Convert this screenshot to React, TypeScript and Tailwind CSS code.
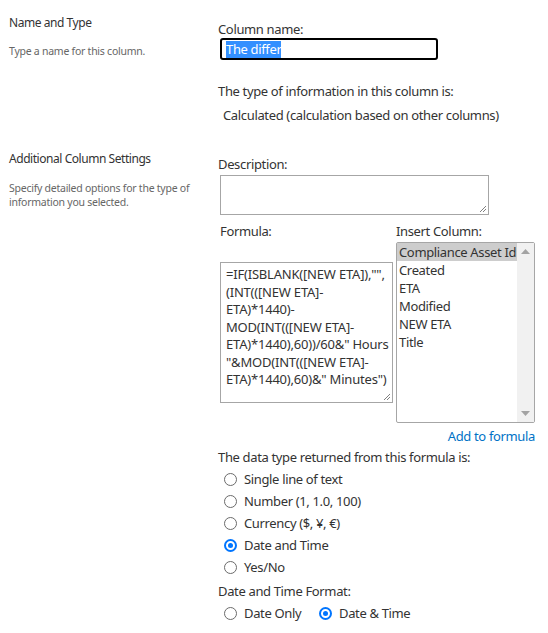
const FONT = "font-['Noto_Sans',_'Liberation_Sans',_sans-serif]";
const BODY = "text-[13px] leading-[18px] tracking-[-0.35px]";

const FORMULA_LINES = [
  '=IF(ISBLANK([NEW ETA]),"",',
  "(INT(([NEW ETA]-",
  "ETA)*1440)-",
  "MOD(INT(([NEW ETA]-",
  'ETA)*1440),60))/60&" Hours',
  '"&MOD(INT(([NEW ETA]-',
  'ETA)*1440),60)&" Minutes")',
];

const COLUMNS = ["Compliance Asset Id", "Created", "ETA", "Modified", "NEW ETA", "Title"];

const RETURN_TYPES = [
  { label: "Single line of text", checked: false },
  { label: "Number (1, 1.0, 100)", checked: false },
  { label: "Currency ($, ¥, €)", checked: false },
  { label: "Date and Time", checked: true },
  { label: "Yes/No", checked: false },
];

function Radio({ checked }: { checked: boolean }) {
  if (checked) {
    return (
      <span className="flex h-[13px] w-[13px] shrink-0 items-center justify-center rounded-full border-2 border-[#0075ff] bg-white">
        <span className="h-[5px] w-[5px] rounded-full bg-[#0075ff]" />
      </span>
    );
  }
  return <span className="h-[13px] w-[13px] shrink-0 rounded-full border border-[#6b6b6b] bg-white" />;
}

function Grip() {
  return (
    <svg className="absolute right-[1px] bottom-[1px]" width="9" height="9" viewBox="0 0 9 9">
      <path d="M8 2 L2 8 M8 5 L5 8" stroke="#808080" strokeWidth="1" />
    </svg>
  );
}

export default function App() {
  return (
    <div className={`${FONT} h-[633px] w-[548px] overflow-hidden bg-white text-[#333]`}>
      {/* Name and Type */}
      <div className="flex">
        <div className="w-[209px] pl-[9px] pt-[15px]">
          <div className="text-[12px] leading-[16px] tracking-[-0.45px]">Name and Type</div>
          <div className="mt-[13px] text-[10.5px] leading-[14px] tracking-[-0.25px] text-[#666]">
            Type a name for this column.
          </div>
        </div>
        <div className="pt-[20px] pl-[9px] pb-[16px]">
          <div className={BODY}>Column name:</div>
          <div className="ml-[2px] flex h-[22px] w-[218px] items-center rounded-[3px] border-2 border-black pl-[4px]">
            <span className="bg-[#3390ff] text-[13px] leading-[17px] tracking-[-0.35px] text-white">The differ</span>
          </div>
          <div className={`mt-[22px] ${BODY}`}>The type of information in this column is:</div>
          <div className={`mt-[6px] ml-[5px] ${BODY}`}>Calculated (calculation based on other columns)</div>
        </div>
      </div>

      {/* Additional Column Settings */}
      <div className="flex">
        <div className="w-[209px] pl-[9px] pt-[11px]">
          <div className="text-[12px] leading-[16px] tracking-[-0.45px]">Additional Column Settings</div>
          <div className="mt-[14px] w-[190px] text-[10.5px] leading-[14px] tracking-[-0.25px] text-[#666]">
            Specify detailed options for the type of information you selected.
          </div>
        </div>
        <div className="pt-[15px] pl-[9px]">
          <div className={BODY}>Description:</div>
          <div className="relative mt-[2px] ml-[2px] h-[40px] w-[269px] border border-[#a6a6a6]">
            <Grip />
          </div>

          <div className="mt-[7px] ml-[2px] flex gap-[3px]">
            <div className="w-[173px]">
              <div className={BODY}>Formula:</div>
              <div className="relative mt-[22px] h-[141px] border border-[#a6a6a6] px-[5px] pt-[3px]">
                {FORMULA_LINES.map((line) => (
                  <div key={line} className="whitespace-pre text-[13px] leading-[17.5px] tracking-[-0.2px]">
                    {line}
                  </div>
                ))}
                <Grip />
              </div>
            </div>
            <div className="w-[139px]">
              <div className={BODY}>Insert Column:</div>
              <div className="mt-[2px] flex h-[181px] rounded-[2px] border border-[#a6a6a6]">
                <div className="flex-1 overflow-hidden">
                  {COLUMNS.map((c, i) => (
                    <div
                      key={c}
                      className={`whitespace-nowrap pl-[2px] ${BODY} ${i === 0 ? "bg-[#cdcdcd]" : ""}`}
                    >
                      {c}
                    </div>
                  ))}
                </div>
                <div className="flex w-[17px] flex-col items-center justify-between bg-[#f1f1f1] py-[6px]">
                  <svg width="9" height="5" viewBox="0 0 9 5">
                    <path d="M0 5 L4.5 0 L9 5 Z" fill="#a3a3a3" />
                  </svg>
                  <svg width="9" height="5" viewBox="0 0 9 5">
                    <path d="M0 0 L9 0 L4.5 5 Z" fill="#a3a3a3" />
                  </svg>
                </div>
              </div>
            </div>
          </div>

          <div className={`mt-[4px] flex w-[317px] justify-end text-[#0072c6] ${BODY}`}>Add to formula</div>
          <div className={`mt-[3px] ${BODY}`}>The data type returned from this formula is:</div>

          <div className="mt-[2px] pl-[6px]">
            {RETURN_TYPES.map((t) => (
              <div key={t.label} className="flex h-[22px] items-center gap-[7px]">
                <Radio checked={t.checked} />
                <span className={BODY}>{t.label}</span>
              </div>
            ))}
          </div>

          <div className={`mt-[4px] ${BODY}`}>Date and Time Format:</div>
          <div className="mt-[2px] flex pl-[6px]">
            <div className="flex h-[22px] w-[95px] items-center gap-[7px]">
              <Radio checked={false} />
              <span className={BODY}>Date Only</span>
            </div>
            <div className="flex h-[22px] items-center gap-[7px]">
              <Radio checked={true} />
              <span className={BODY}>Date &amp; Time</span>
            </div>
          </div>
        </div>
      </div>
    </div>
  );
}
